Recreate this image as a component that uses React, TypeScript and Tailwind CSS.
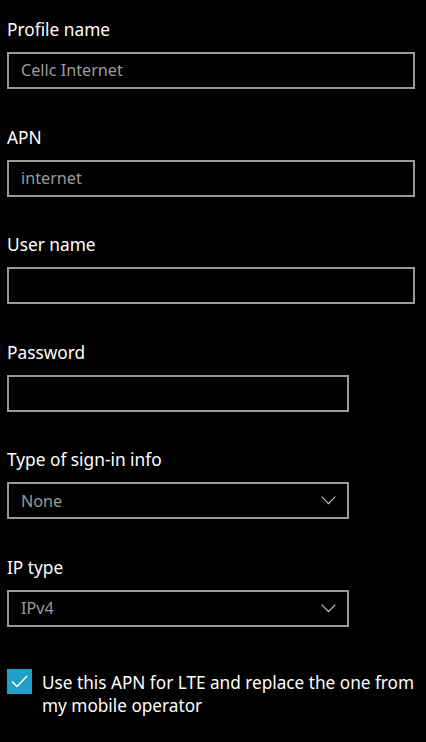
const font = { fontFamily: '"Noto Sans", "Open Sans", sans-serif' };

function Field({ label, value, narrow, select }: { label: string; value?: string; narrow?: boolean; select?: boolean }) {
  return (
    <div className="flex flex-col">
      <div className="h-[24px] leading-[24px] text-[17.3px] text-white">{label}</div>
      <div
        className={`mt-[10px] h-[37px] border-2 border-[#999999] flex items-center pl-[12px] pr-[10px] ${narrow ? "w-[342px]" : "w-[408px]"}`}
      >
        <span className="flex-1 text-[16.2px] text-[#9a9a9a] leading-none">{value}</span>
        {select && (
          <svg width="15" height="9" viewBox="0 0 15 9" className="mr-[1px]">
            <path d="M0.7 0.7 L7.5 7.6 L14.3 0.7" fill="none" stroke="#c8c8c8" strokeWidth="1.1" />
          </svg>
        )}
      </div>
    </div>
  );
}

export default function App() {
  return (
    <div className="w-[426px] h-[742px] bg-black overflow-hidden" style={font}>
      <div className="pl-[7px] pt-[18px] flex flex-col gap-[36.6px]">
        <Field label="Profile name" value="Cellc Internet" />
        <Field label="APN" value="internet" />
        <Field label="User name" />
        <Field label="Password" narrow />
        <Field label="Type of sign-in info" value="None" narrow select />
        <Field label="IP type" value="IPv4" narrow select />
      </div>
      <div className="flex items-start pl-[7px] mt-[42px]">
        <div className="w-[25px] h-[25px] bg-[#1f9fc9] flex items-center justify-center shrink-0">
          <svg width="17" height="13" viewBox="0 0 17 13">
            <path d="M1 6.5 L6 11.5 L16 1" fill="none" stroke="white" strokeWidth="1.5" />
          </svg>
        </div>
        <div className="ml-[10px] text-[17.2px] leading-[23px] text-white mt-[2px]">
          Use this APN for LTE and replace the one from my mobile operator
        </div>
      </div>
    </div>
  );
}
